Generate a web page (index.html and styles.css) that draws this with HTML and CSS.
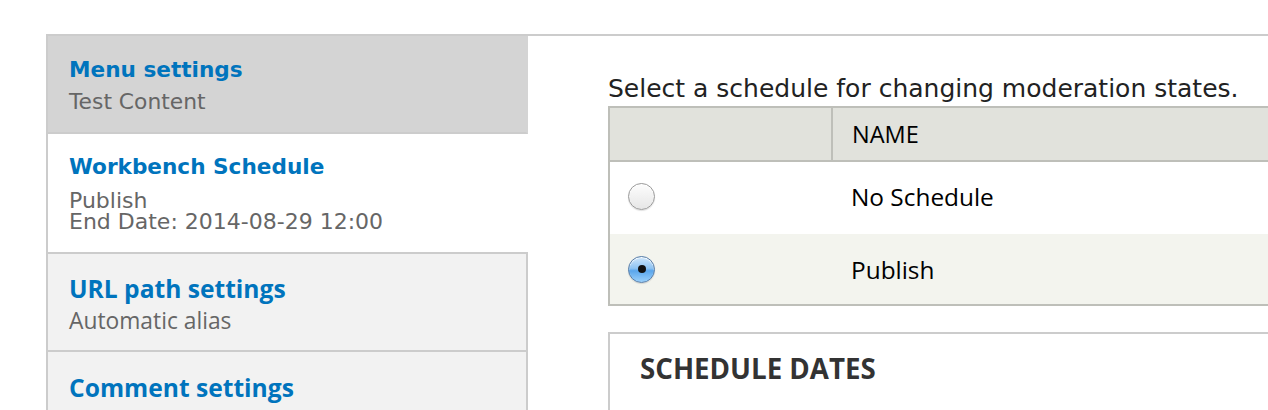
FILE: index.html
```html
<!DOCTYPE html>
<html>
<head>
<meta charset="utf-8">
<link rel="stylesheet" href="styles.css">
</head>
<body>
<div class="vtabs">
  <ul class="tabs">
    <li class="tab tab-hover">
      <a class="tab-title t-menu" href="#">Menu settings</a>
      <div class="tab-summary">Test Content</div>
    </li>
    <li class="tab tab-selected">
      <a class="tab-title t-wb" href="#">Workbench Schedule</a>
      <div class="tab-summary tight">
        <div class="line">Publish</div>
        <div class="line">End Date: 2014-08-29 12:00</div>
      </div>
    </li>
    <li class="tab">
      <a class="tab-title t-url" href="#">URL path settings</a>
      <div class="tab-summary t-alias">Automatic alias</div>
    </li>
    <li class="tab tab-last">
      <a class="tab-title t-comment" href="#">Comment settings</a>
    </li>
  </ul>
  <div class="panes">
    <p class="desc">Select a schedule for changing moderation states.</p>
    <table class="sched">
      <thead>
        <tr><th class="c-radio"></th><th class="c-name">NAME</th></tr>
      </thead>
      <tbody>
        <tr class="odd"><td class="c-radio"><span class="radio"></span></td><td class="c-name">No Schedule</td></tr>
        <tr class="even"><td class="c-radio"><span class="radio checked"></span></td><td class="c-name">Publish</td></tr>
      </tbody>
    </table>
    <fieldset class="dates">
      <h2 class="legend">SCHEDULE DATES</h2>
    </fieldset>
  </div>
</div>
</body>
</html>
```
FILE: styles.css
```css
html, body {
  margin: 0;
  padding: 0;
  background: #fff;
  overflow: hidden;
}
body {
  width: 1268px;
  height: 410px;
  font-family: "DejaVu Sans", "Lucida Grande", Verdana, sans-serif;
}
.vtabs {
  margin: 34px 0 0 46px;
  border-top: 2px solid #cccccc;
  border-left: 2px solid #cccccc;
  display: flex;
  align-items: flex-start;
}
.tabs {
  list-style: none;
  margin: 0;
  padding: 0;
  width: 480px;
  flex: none;
}
.tab {
  background: #f2f2f2;
  border-bottom: 2px solid #cccccc;
  border-right: 2px solid #cccccc;
  padding: 0 0 0 21px;
  height: 98px;
  box-sizing: border-box;
  display: flex;
  flex-direction: column;
}
.tab-hover {
  background: #d4d4d4;
  border-right-color: #d4d4d4;
  height: 98px;
}
.tab-selected {
  background: #fff;
  border-right: none;
  height: 120px;
}
.tab-last {
  height: 80px;
  border-bottom: none;
}
.tab-title {
  color: #0074bd;
  text-decoration: none;
  font-weight: bold;
  font-family: "Open Sans", "Noto Sans", sans-serif;
  font-size: 24.6px;
  line-height: 30px;
  margin-top: 19px;
}
.t-menu, .t-wb {
  font-family: "DejaVu Sans", sans-serif;
  font-size: 21.6px;
}
.t-menu { margin-top: 19px; }
.t-wb { margin-top: 18px; }
.t-url { margin-top: 20px; }
.t-comment { margin-top: 21px; }
.tab-summary {
  color: #666;
  font-size: 21.8px;
  line-height: 30px;
  margin-top: 2px;
}
.tab-summary.tight {
  margin-top: 8px;
  font-size: 22px;
}
.tab-summary.tight .line {
  height: 21px;
  line-height: 21px;
}
.t-alias {
  font-family: "Open Sans", "Noto Sans", sans-serif;
  font-size: 22.8px;
}
.panes {
  flex: 1;
  padding: 0 0 0 80px;
  min-width: 0;
}
.desc {
  margin: 38px 0 0;
  font-size: 25px;
  line-height: 30px;
  color: #222;
  white-space: nowrap;
}
.sched {
  margin-top: 2px;
  width: 700px;
  border-collapse: collapse;
  border: 2px solid #bebfb9;
  font-family: "Open Sans", "Noto Sans", sans-serif;
  font-size: 24.4px;
  color: #000;
}
.sched th {
  background: #e1e2dc;
  height: 52px;
  text-align: left;
  font-weight: normal;
  font-size: 23.5px;
  padding: 0 0 0 19px;
  border-bottom: 2px solid #bebfb9;
}
.sched th.c-radio {
  border-right: 2px solid #bebfb9;
  width: 202px;
}
.sched td {
  padding: 0 0 0 19px;
}
.sched tr.odd td { height: 69px; background: #fff; padding-bottom: 3px; }
.sched tr.even td { height: 70px; background: #f3f4ee; }
.sched td.c-radio { padding-left: 18px; }
.radio {
  display: block;
  width: 27px;
  height: 27px;
  box-sizing: border-box;
  border-radius: 50%;
  border: 1px solid #9a9a9a;
  background: linear-gradient(#fdfdfd, #e6e6e6);
  box-shadow: inset 0 1px 1px rgba(255,255,255,0.9), 0 1px 1px rgba(0,0,0,0.12);
  position: relative;
}
.radio.checked {
  border-color: #5b7ea6;
  background: linear-gradient(#cfe6fb 0%, #8fc4f3 45%, #5aa6ec 55%, #9ad0fb 100%);
}
.radio.checked::after {
  content: "";
  position: absolute;
  left: 50%;
  top: 50%;
  width: 8px;
  height: 8px;
  margin: -4px 0 0 -4px;
  border-radius: 50%;
  background: #111;
}
.dates {
  margin: 26px 0 0;
  padding: 0 0 0 30px;
  border: 2px solid #cccccc;
  border-right: none;
  height: 120px;
  min-width: 0;
}
.legend {
  margin: 14px 0 0;
  font-family: "Open Sans", "Noto Sans", sans-serif;
  font-weight: bold;
  font-size: 27.7px;
  letter-spacing: 0;
  line-height: 40px;
  color: #333;
}
```
